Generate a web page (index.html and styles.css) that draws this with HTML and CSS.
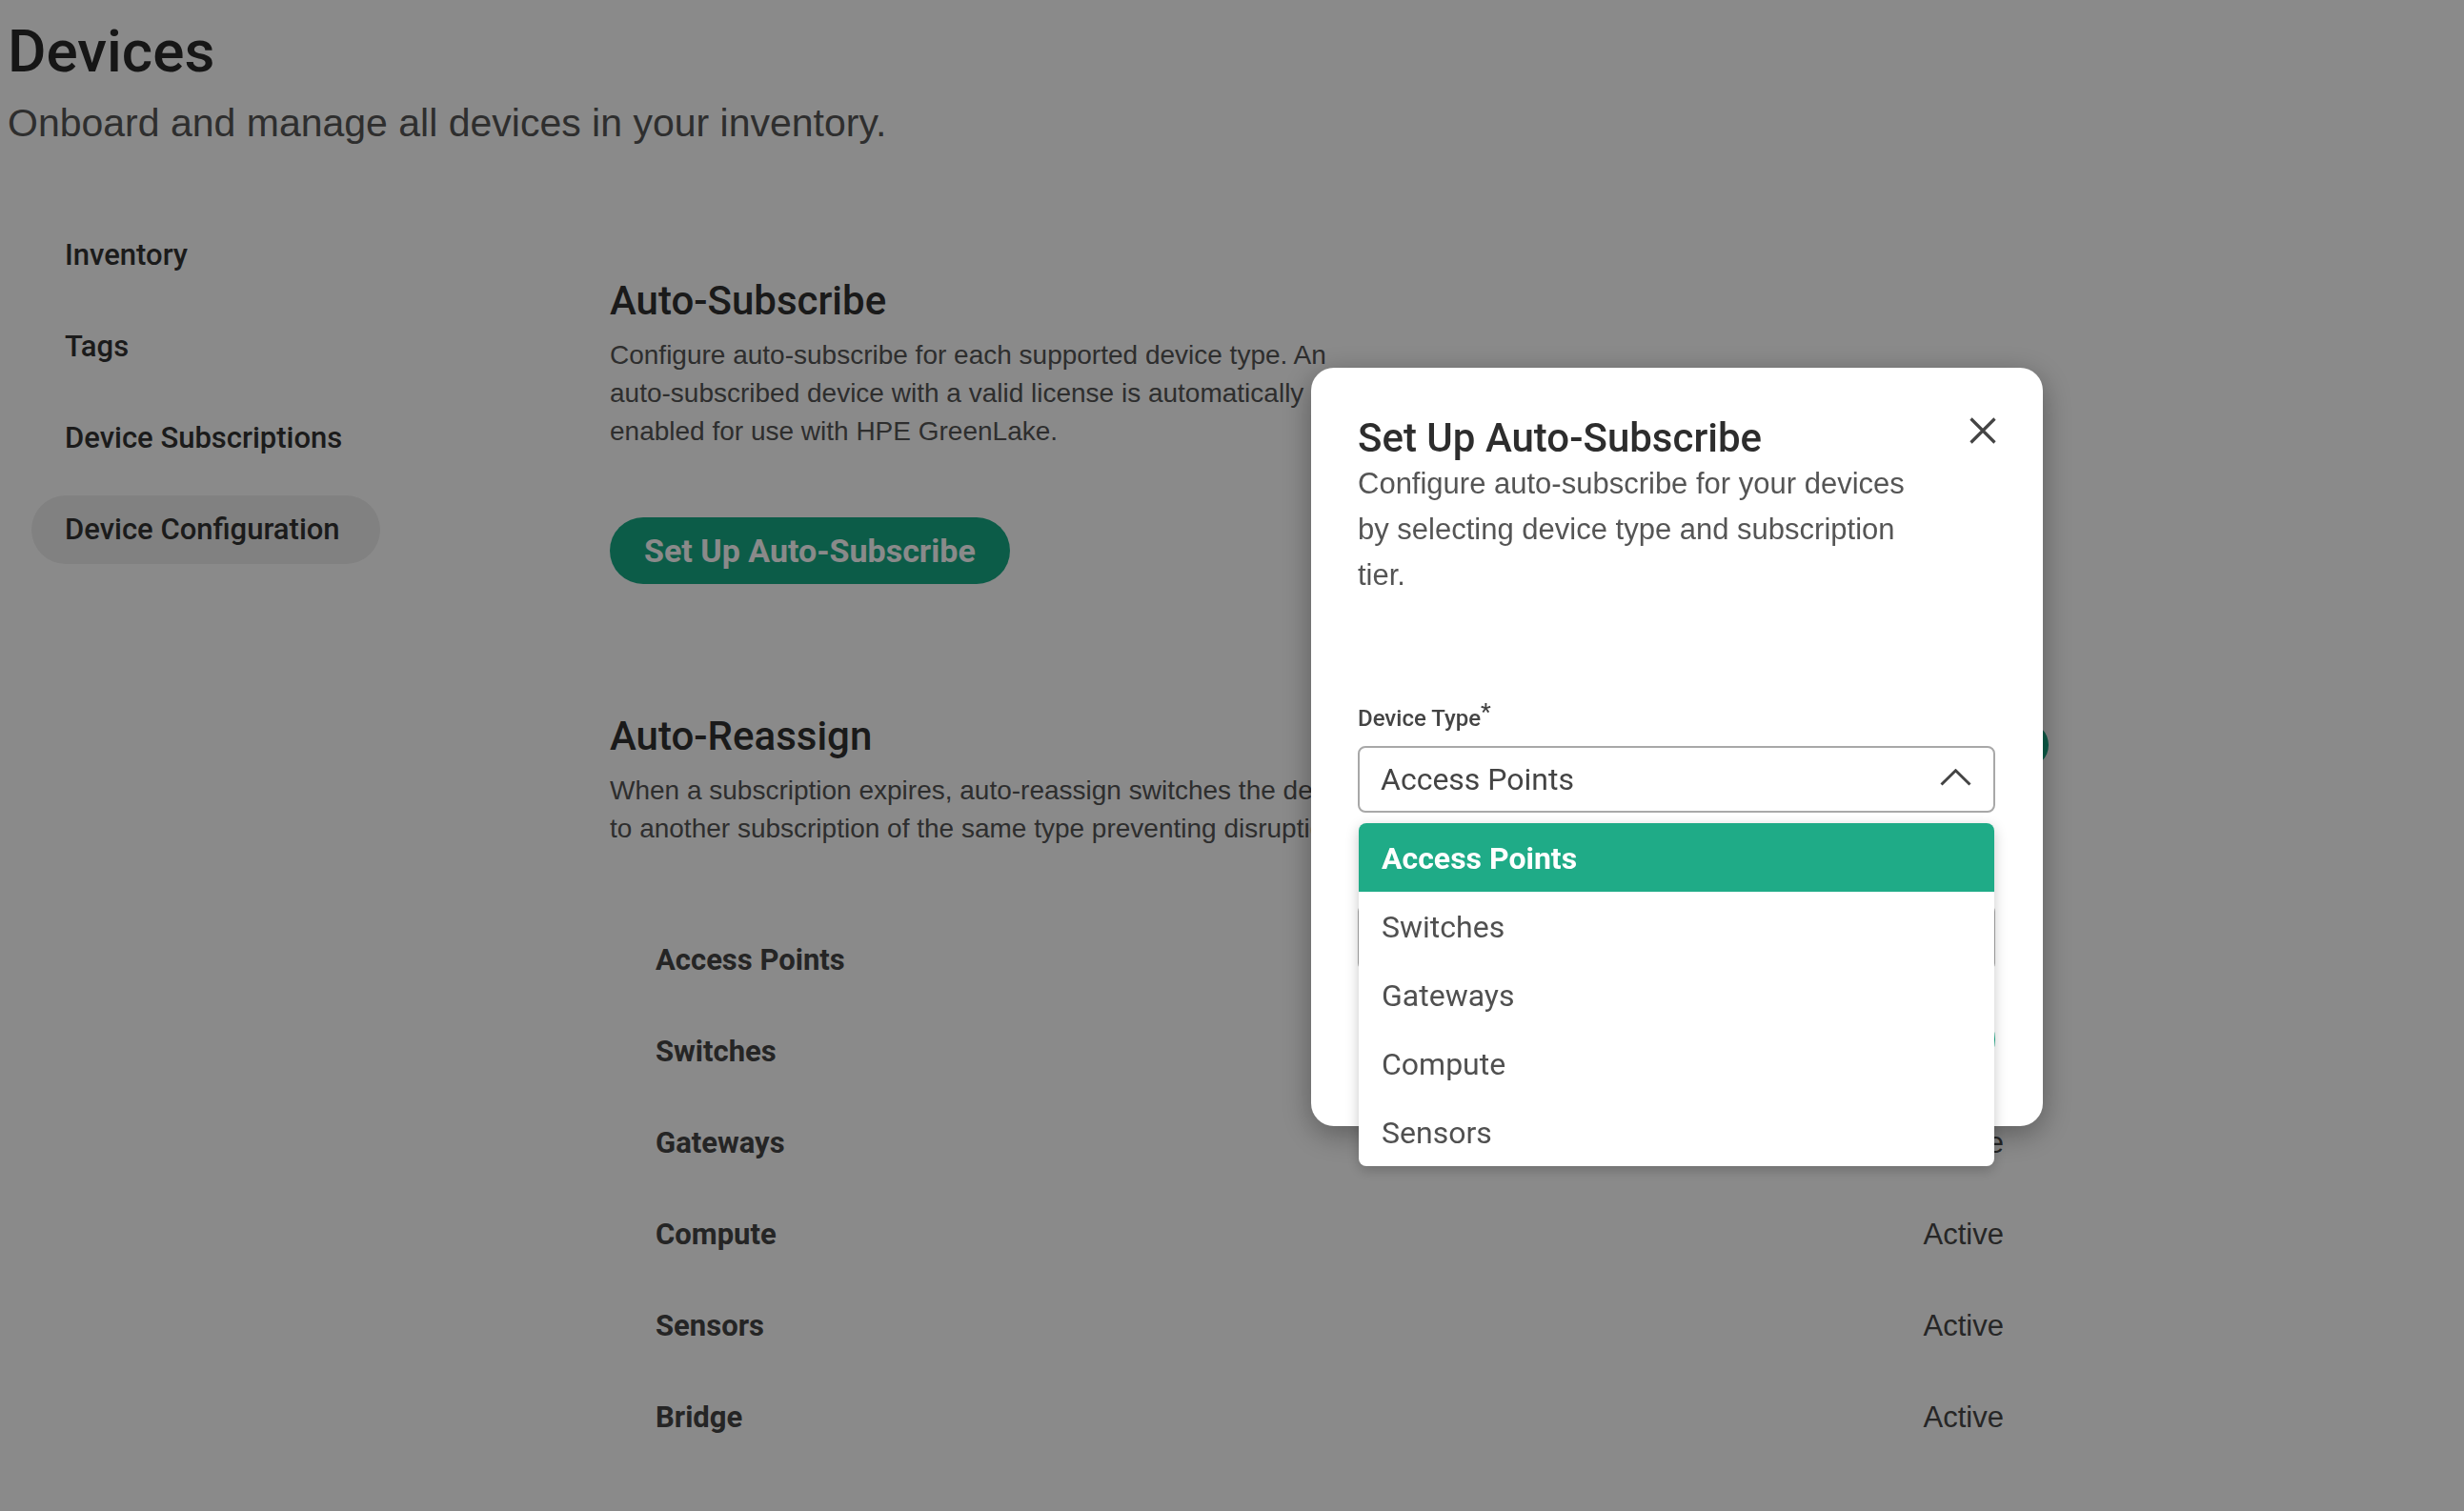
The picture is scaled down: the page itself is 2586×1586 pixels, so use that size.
FILE: index.html
```html
<!DOCTYPE html>
<html lang="en">
<head>
    <meta charset="UTF-8">
    <meta name="viewport" content="width=device-width, initial-scale=1.0">
    <title>Devices</title>
    <link rel="stylesheet" href="styles.css">
</head>
<body>
    <div class="page">
        <header class="page-header">
            <h1>Devices</h1>
            <p class="page-subtitle">Onboard and manage all devices in your inventory.</p>
        </header>

        <div class="layout">
            <nav class="side-nav">
                <a class="nav-item">Inventory</a>
                <a class="nav-item">Tags</a>
                <a class="nav-item">Device Subscriptions</a>
                <a class="nav-item active">Device Configuration</a>
            </nav>

            <main class="content">
                <section class="section">
                    <h2>Auto-Subscribe</h2>
                    <p class="section-text">Configure auto-subscribe for each supported device type. An auto-subscribed device with a valid license is automatically enabled for use with HPE GreenLake.</p>
                    <button class="primary-button">Set Up Auto-Subscribe</button>
                </section>

                <section class="section reassign">
                    <div class="section-head">
                        <h2>Auto-Reassign</h2>
                        <span class="toggle"><span class="knob"></span></span>
                    </div>
                    <p class="section-text">When a subscription expires, auto-reassign switches the device to another subscription of the same type preventing disruption.</p>

                    <ul class="device-list">
                        <li><span class="device-name">Access Points</span><span class="device-status">Active</span></li>
                        <li><span class="device-name">Switches</span><span class="device-status">Active</span></li>
                        <li><span class="device-name">Gateways</span><span class="device-status">Active</span></li>
                        <li><span class="device-name">Compute</span><span class="device-status">Active</span></li>
                        <li><span class="device-name">Sensors</span><span class="device-status">Active</span></li>
                        <li><span class="device-name">Bridge</span><span class="device-status">Active</span></li>
                    </ul>
                </section>
            </main>
        </div>
    </div>

    <div class="overlay"></div>

    <div class="modal">
        <div class="modal-head">
            <h3 class="modal-title">Set Up Auto-Subscribe</h3>
            <button class="close-button" aria-label="Close">
                <svg width="28" height="28" viewBox="0 0 28 28">
                    <path d="M1.5 1.5 L26.5 26.5 M26.5 1.5 L1.5 26.5" stroke="#444" stroke-width="3.2" fill="none"/>
                </svg>
            </button>
        </div>
        <p class="modal-text">Configure auto-subscribe for your devices by selecting device type and subscription tier.</p>

        <div class="field-label">Device Type<span class="req">*</span></div>
        <div class="select-wrap">
            <div class="select">
                <span>Access Points</span>
                <svg width="33" height="18" viewBox="0 0 33 18">
                    <polyline points="1.5,16.5 16.5,1.8 31.5,16.5" stroke="#444" stroke-width="3" fill="none"/>
                </svg>
            </div>
            <ul class="dropdown">
                <li class="option selected">Access Points</li>
                <li class="option">Switches</li>
                <li class="option">Gateways</li>
                <li class="option">Compute</li>
                <li class="option">Sensors</li>
            </ul>
        </div>

        <!-- subscription tier field, hidden behind the open list -->
        <div class="input"></div>

        <div class="modal-foot">
            <button class="primary-button"></button>
        </div>
    </div>
</body>
</html>
```

FILE: styles.css
```css
body {
    margin: 0;
    background-color: #fff;
    font-family: "Liberation Sans", Arial, sans-serif;
    color: #444;
}

.page {
    padding: 21px 8px 0;
}

h1 {
    margin: 0;
    font-family: Roboto, "Liberation Sans", sans-serif;
    font-weight: 500;
    font-size: 62px;
    line-height: 66px;
    color: #2a2a2a;
}

.page-subtitle {
    margin: 18px 0 0;
    font-size: 41px;
    line-height: 48px;
    color: #555;
}

.layout {
    display: flex;
}

/* left menu */
.side-nav {
    width: 607px;
    padding: 79px 0 0 25px;
    display: flex;
    flex-direction: column;
    align-items: flex-start;
    gap: 24px;
}

.nav-item {
    height: 72px;
    line-height: 72px;
    padding: 0 42px 0 35px;
    border-radius: 36px;
    font-family: Roboto, sans-serif;
    font-weight: 500;
    font-size: 31px;
    color: #333;
}

.nav-item.active {
    background-color: #eee;
}

.content {
    width: 1510px;
    padding-top: 139px;
}

h2 {
    margin: 0;
    font-family: Roboto, sans-serif;
    font-weight: 500;
    font-size: 42px;
    line-height: 48px;
    color: #303030;
}

.section-text {
    margin: 13px 0 0;
    max-width: 800px;
    font-size: 28px;
    line-height: 40px;
    color: #555;
}

.primary-button {
    display: block;
    height: 70px;
    padding: 0 36px;
    border: none;
    border-radius: 35px;
    background-color: #17aa86;
    color: #fff;
    font-family: Roboto, sans-serif;
    font-weight: 700;
    font-size: 34px;
    cursor: pointer;
}

.section .primary-button {
    margin-top: 70px;
}

.reassign {
    margin-top: 136px;
}

.section-head {
    display: flex;
    justify-content: space-between;
    align-items: flex-start;
}

.toggle {
    position: relative;
    width: 96px;
    height: 48px;
    margin: 9px 0 -9px;
    border-radius: 24px;
    background-color: #17aa86;
}

.knob {
    position: absolute;
    top: 6px;
    right: 6px;
    width: 36px;
    height: 36px;
    border-radius: 50%;
    background-color: #fff;
}

.device-list {
    list-style: none;
    margin: 70px 0 0;
    padding: 0 47px 0 48px;
}

.device-list li {
    display: flex;
    justify-content: space-between;
    align-items: center;
    height: 96px;
    line-height: 36px;
}

.device-name {
    font-family: Roboto, sans-serif;
    font-weight: 700;
    font-size: 31px;
    color: #454545;
}

.device-status {
    font-size: 31px;
    color: #474747;
}

/* modal */
.overlay {
    position: fixed;
    top: 0;
    left: 0;
    right: 0;
    bottom: 0;
    background-color: rgba(0, 0, 0, 0.46);
}

.modal {
    position: fixed;
    left: 1376px;
    top: 386px;
    width: 768px;
    box-sizing: border-box;
    padding: 50px 50px 56px 49px;
    background-color: #fff;
    border-radius: 24px;
    box-shadow: 0 8px 32px rgba(0, 0, 0, 0.35);
}

.modal-head {
    display: flex;
    justify-content: space-between;
    align-items: flex-start;
}

.modal-title {
    margin: 0;
    font-family: Roboto, sans-serif;
    font-weight: 500;
    font-size: 42px;
    line-height: 48px;
    color: #2d2d2d;
}

.close-button {
    width: 28px;
    height: 28px;
    margin: 2px -1px 0 0;
    padding: 0;
    border: none;
    background: none;
    cursor: pointer;
}

.close-button svg {
    display: block;
}

.modal-text {
    margin: 0;
    max-width: 595px;
    font-size: 31px;
    line-height: 48px;
    color: #555;
}

.field-label {
    margin-top: 109px;
    font-family: Roboto, sans-serif;
    font-weight: 500;
    font-size: 24px;
    line-height: 32px;
    color: #444;
}

.req {
    font-size: 24px;
    line-height: 20px;
    vertical-align: 7px;
}

.select-wrap {
    position: relative;
    margin-top: 13px;
}

.select {
    height: 70px;
    box-sizing: border-box;
    border: 2px solid #a8a8a8;
    border-radius: 8px;
    padding: 0 23px 0 22px;
    display: flex;
    justify-content: space-between;
    align-items: center;
    font-family: Roboto, sans-serif;
    font-size: 32px;
    color: #444;
}

.select svg {
    margin-top: -4px;
}

.dropdown {
    position: absolute;
    top: calc(100% + 11px);
    left: 1px;
    right: 1px;
    margin: 0;
    padding: 0;
    list-style: none;
    background-color: #fff;
    border-radius: 8px;
    overflow: hidden;
    box-shadow: 0 4px 14px rgba(0, 0, 0, 0.22);
}

.option {
    height: 72px;
    line-height: 74px;
    padding: 0 24px;
    font-family: Roboto, sans-serif;
    font-size: 32px;
    color: #505050;
}

.option.selected {
    background-color: #1fab87;
    color: #fff;
    font-weight: 700;
}

.input {
    height: 70px;
    margin-top: 96px;
    box-sizing: border-box;
    border: 2px solid #a8a8a8;
    border-radius: 8px;
}

.modal-foot {
    margin-top: 37px;
    display: flex;
    justify-content: flex-end;
}

.modal-foot .primary-button {
    width: 180px;
}
```
